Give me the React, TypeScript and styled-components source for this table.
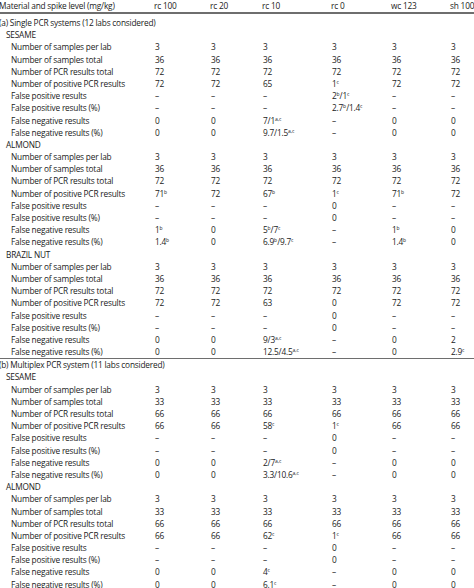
import React from 'react';
import styled, { createGlobalStyle } from 'styled-components';

type Row = { label: string; cells: string[] };
type Group = { name: string; rows: Row[] };
type Section = { title: string; groups: Group[] };

const LABELS = [
  'Number of samples per lab',
  'Number of samples total',
  'Number of PCR results total',
  'Number of positive PCR results',
  'False positive results',
  'False positive results (%)',
  'False negative results',
  'False negative results (%)',
];

const group = (name: string, data: string[][]): Group => ({
  name,
  rows: data.map((cells, i) => ({ label: LABELS[i], cells })),
});

const d = '–';

const SECTIONS: Section[] = [
  {
    title: '(a) Single PCR systems (12 labs considered)',
    groups: [
      group('SESAME', [
        ['3', '3', '3', '3', '3', '3'],
        ['36', '36', '36', '36', '36', '36'],
        ['72', '72', '72', '72', '72', '72'],
        ['72', '72', '65', '1^c', '72', '72'],
        [d, d, d, '2^b/1^c', d, d],
        [d, d, d, '2.7^b/1.4^c', d, d],
        ['0', '0', '7/1^a,c', d, '0', '0'],
        ['0', '0', '9.7/1.5^a,c', d, '0', '0'],
      ]),
      group('ALMOND', [
        ['3', '3', '3', '3', '3', '3'],
        ['36', '36', '36', '36', '36', '36'],
        ['72', '72', '72', '72', '72', '72'],
        ['71^b', '72', '67^b', '1^c', '71^b', '72'],
        [d, d, d, '0', d, d],
        [d, d, d, '0', d, d],
        ['1^b', '0', '5^b/7^c', d, '1^b', '0'],
        ['1.4^b', '0', '6.9^b/9.7^c', d, '1.4^b', '0'],
      ]),
      group('BRAZIL NUT', [
        ['3', '3', '3', '3', '3', '3'],
        ['36', '36', '36', '36', '36', '36'],
        ['72', '72', '72', '72', '72', '72'],
        ['72', '72', '63', '0', '72', '72'],
        [d, d, d, '0', d, d],
        [d, d, d, '0', d, d],
        ['0', '0', '9/3^a,c', d, '0', '2'],
        ['0', '0', '12.5/4.5^a,c', d, '0', '2.9^c'],
      ]),
    ],
  },
  {
    title: '(b) Multiplex PCR system (11 labs considered)',
    groups: [
      group('SESAME', [
        ['3', '3', '3', '3', '3', '3'],
        ['33', '33', '33', '33', '33', '33'],
        ['66', '66', '66', '66', '66', '66'],
        ['66', '66', '58^c', '1^c', '66', '66'],
        [d, d, d, '0', d, d],
        [d, d, d, '0', d, d],
        ['0', '0', '2/7^a,c', d, '0', '0'],
        ['0', '0', '3.3/10.6^a,c', d, '0', '0'],
      ]),
      group('ALMOND', [
        ['3', '3', '3', '3', '3', '3'],
        ['33', '33', '33', '33', '33', '33'],
        ['66', '66', '66', '66', '66', '66'],
        ['66', '66', '62^c', '1^c', '66', '66'],
        [d, d, d, '0', d, d],
        [d, d, d, '0', d, d],
        ['0', '0', '4^c', d, '0', '0'],
        ['0', '0', '6.1^c', d, '0', '0'],
      ]),
    ],
  },
];

const COLUMNS = ['rc 100', 'rc 20', 'rc 10', 'rc 0', 'wc 123', 'sh 100'];

// "2^b/1^c" -> 2<sup>b</sup>/1<sup>c</sup>
const Value: React.FC<{ text: string }> = ({ text }) => {
  const parts = text.split(/\^([a-z,]+)/);
  return (
    <>
      {parts.map((p, i) => (i % 2 ? <Sup key={i}>{p}</Sup> : <React.Fragment key={i}>{p}</React.Fragment>))}
    </>
  );
};

const App: React.FC = () => {
  return (
    <>
      <GlobalStyle />
      <Table>
        <HeadRow>
          <Cell>Material and spike level (mg/kg)</Cell>
          {COLUMNS.map((c) => (
            <Cell key={c}>{c}</Cell>
          ))}
        </HeadRow>

        {SECTIONS.map((s, si) => (
          <React.Fragment key={s.title}>
            <SectionRow $ruled={si > 0}>{s.title}</SectionRow>
            {s.groups.map((g) => (
              <React.Fragment key={s.title + g.name}>
                <GroupRow>{g.name}</GroupRow>
                {g.rows.map((r) => (
                  <DataRow key={r.label}>
                    <Label>{r.label}</Label>
                    {r.cells.map((c, ci) => (
                      <Cell key={ci}>
                        <Value text={c} />
                      </Cell>
                    ))}
                  </DataRow>
                ))}
              </React.Fragment>
            ))}
          </React.Fragment>
        ))}
      </Table>
    </>
  );
};

export default App;

const GlobalStyle = createGlobalStyle`
  html, body {
    margin: 0;
    padding: 0;
    background: #ffffff;
  }
  body {
    font-family: 'Open Sans', 'Liberation Sans', sans-serif;
    color: #1a1a1a;
  }
`;

const Table = styled.div`
  width: 474px;
  overflow: hidden;
  font-size: 8.3px;
  letter-spacing: -0.2px;
  line-height: 12.2px;
`;

const Grid = styled.div`
  display: grid;
  grid-template-columns: 155px 56px 52px 69px 60px 59px 1fr;
  height: 12.2px;
  white-space: nowrap;
`;

const HeadRow = styled(Grid)`
  height: 12px;
  line-height: 11px;
  border-bottom: 2px solid #6e6e6e;
  margin-bottom: 3px;
  margin-left: -1px;
`;

const DataRow = styled(Grid)``;

const Cell = styled.div`
  overflow: visible;
`;

const Label = styled.div`
  padding-left: 11px;
`;

const SectionRow = styled.div<{ $ruled?: boolean }>`
  height: 12.2px;
  margin-left: -1px;
  white-space: nowrap;
  border-top: ${(p) => (p.$ruled ? '1px solid #6e6e6e' : 'none')};
`;

const GroupRow = styled.div`
  height: 12.2px;
  padding-left: 6px;
`;

const Sup = styled.sup`
  font-size: 5px;
  letter-spacing: 0;
  line-height: 0;
  vertical-align: 3px;
`;
